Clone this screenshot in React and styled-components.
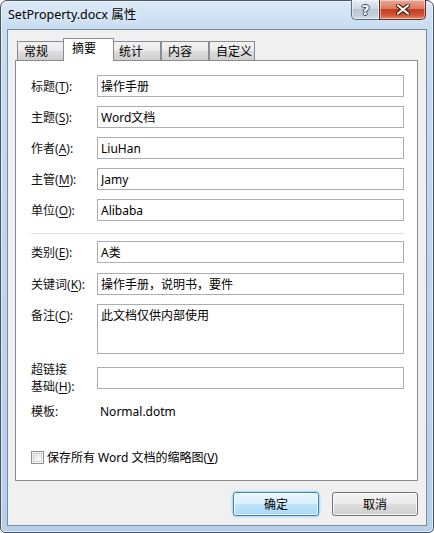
import React from 'react';
import styled, { createGlobalStyle, css } from 'styled-components';

const GlobalStyle = createGlobalStyle`
  html, body {
    margin: 0;
    padding: 0;
    background: #ffffff;
  }
  body {
    font-family: "Noto Sans", "Noto Sans CJK SC", sans-serif;
    font-size: 12px;
    color: #000;
  }
  * { box-sizing: border-box; }
`;

const Window = styled.div`
  width: 434px;
  height: 533px;
  display: flex;
  flex-direction: column;
  border: 1px solid #4a5563;
  border-radius: 7px 7px 5px 5px;
  background: linear-gradient(180deg, #dbe9f7 0%, #c8ddf2 5%, #bfd6ee 45%, #b7cfe9 100%);
  box-shadow: inset 0 0 0 1px rgba(255, 255, 255, 0.55);
  padding: 0 6px 6px 6px;
`;

const TitleBar = styled.div`
  height: 28px;
  display: flex;
  align-items: flex-start;
`;

const Title = styled.div`
  flex: 1;
  padding-left: 1px;
  line-height: 28px;
  font-size: 12.5px;
  color: #000;
  text-shadow: 0 0 8px rgba(255, 255, 255, 0.9);
`;

const CaptionGroup = styled.div`
  display: flex;
  margin-top: -1px;
  margin-right: 1px;
`;

const CaptionButton = styled.div`
  height: 20px;
  display: flex;
  align-items: center;
  justify-content: center;
  border: 1px solid #5d6d80;
  border-top: none;
  box-shadow: inset 0 0 0 1px rgba(255, 255, 255, 0.45);
  ${({ $close }) =>
    $close
      ? css`
          width: 47px;
          border-color: #6b2a1f;
          border-radius: 0 0 5px 0;
          background: linear-gradient(180deg, #eba996 0%, #dd7a62 45%, #c43d1e 50%, #cf5838 80%, #e08e6f 100%);
        `
      : css`
          width: 28px;
          border-right: none;
          border-radius: 0 0 0 5px;
          background: linear-gradient(180deg, #e7edf4 0%, #d0dae6 45%, #b7c5d5 50%, #c2cfdd 80%, #d6e0ea 100%);
        `}
`;

const HelpGlyph = styled.span`
  font-family: "DejaVu Sans", sans-serif;
  font-weight: bold;
  font-size: 14px;
  line-height: 1;
  color: #ffffff;
  text-shadow: -1px 0 #3b4a5c, 1px 0 #3b4a5c, 0 -1px #3b4a5c, 0 1px #3b4a5c;
`;

const Client = styled.div`
  flex: 1;
  display: flex;
  flex-direction: column;
  background: #f0f0f0;
  border: 1px solid #7b8a9c;
  padding: 8px 8px 9px 7px;
`;

const TabStrip = styled.div`
  height: 22px;
  display: flex;
  align-items: flex-end;
  padding-left: 2px;
  position: relative;
  z-index: 1;
`;

const Tab = styled.div`
  height: 19px;
  width: ${({ $w }) => $w}px;
  padding-left: 6px;
  line-height: 19px;
  border: 1px solid #898c95;
  border-bottom: none;
  background: linear-gradient(180deg, #f2f2f2 0%, #ebebeb 50%, #dddddd 51%, #cfcfcf 100%);
  color: #000;
  ${({ $active }) =>
    $active &&
    css`
      height: 23px;
      margin: 0 -2px -1px;
      padding-left: 8px;
      line-height: 20px;
      background: #ffffff;
      position: relative;
      z-index: 2;
    `}
`;

const Panel = styled.div`
  flex: 1;
  background: #ffffff;
  border: 1px solid #898c95;
  padding: 14px 13px 0 15px;
  display: flex;
  flex-direction: column;
`;

const Row = styled.div`
  display: flex;
  align-items: ${({ $top }) => ($top ? 'flex-start' : 'center')};
  margin-bottom: ${({ $mb }) => $mb}px;
`;

const Label = styled.div`
  width: 66px;
  flex-shrink: 0;
  line-height: ${({ $lh }) => $lh || 15}px;
  color: #111;
  white-space: pre-line;
  ${({ $top }) => $top && css`padding-top: 4px;`}
  u { text-decoration: underline; text-underline-offset: 2px; }
`;

const fieldBase = css`
  flex: 1;
  min-width: 0;
  border: 1px solid #abadb3;
  background: #ffffff;
  font-family: inherit;
  font-size: 12px;
  color: #000;
  padding: 0 3px;
  outline: none;
  margin: 0;
`;

const Field = styled.input`
  ${fieldBase}
  height: 22px;
`;

const Area = styled.textarea`
  ${fieldBase}
  height: 50px;
  padding-top: 3px;
  line-height: 15px;
  resize: none;
  overflow: hidden;
`;

const Value = styled.div`
  padding-left: 3px;
  line-height: 15px;
`;

const Separator = styled.div`
  height: 1px;
  background: #d5dfe5;
  margin-bottom: 7px;
`;

const CheckRow = styled.label`
  display: flex;
  align-items: center;
  line-height: 15px;
`;

const CheckBox = styled.span`
  width: 13px;
  height: 13px;
  margin-right: 3px;
  border: 1px solid #8f8f8f;
  background: linear-gradient(135deg, #dcdcdc 0%, #f4f4f4 60%, #ffffff 100%);
  box-shadow: inset 0 0 0 1px #f4f4f4, inset 0 0 0 2px #d0d0d0;
`;

const ButtonRow = styled.div`
  display: flex;
  justify-content: flex-end;
  gap: 13px;
  margin-top: 11px;
`;

const Button = styled.button`
  width: 86px;
  height: 24px;
  margin: 0;
  border-radius: 3px;
  font-family: inherit;
  font-size: 12px;
  color: #000;
  border: 1px solid #707070;
  box-shadow: inset 0 0 0 1px rgba(255, 255, 255, 0.8);
  background: linear-gradient(180deg, #f2f2f2 0%, #ebebeb 49%, #dddddd 50%, #cfcfcf 100%);
  ${({ $default }) =>
    $default &&
    css`
      border-color: #3c7fb1;
      box-shadow: inset 0 0 0 1px #ffffff, 0 0 2px 1px #9fd9f7;
      background: linear-gradient(180deg, #eaf6fd 0%, #d9f0fc 49%, #bee6fd 50%, #a7d9f5 100%);
    `}
`;

const CloseGlyph = () => (
  <svg width="14" height="11" viewBox="0 0 14 11">
    <path d="M2 1.5 L12 9.5 M12 1.5 L2 9.5" stroke="#4a1c14" strokeWidth="4.2" strokeLinecap="round" />
    <path d="M2 1.5 L12 9.5 M12 1.5 L2 9.5" stroke="#ffffff" strokeWidth="2.2" strokeLinecap="round" />
  </svg>
);

const tabs = [
  { name: '常规', w: 48 },
  { name: '摘要', w: 47, active: true },
  { name: '统计', w: 49 },
  { name: '内容', w: 48 },
  { name: '自定义', w: 46 },
];

const fields = [
  { label: '标题', key: 'T', value: '操作手册' },
  { label: '主题', key: 'S', value: 'Word文档' },
  { label: '作者', key: 'A', value: 'LiuHan' },
  { label: '主管', key: 'M', value: 'Jamy' },
  { label: '单位', key: 'O', value: 'Alibaba' },
];

const Keyed = ({ text, k }) => (
  <>
    {text}(<u>{k}</u>):
  </>
);

export default function App() {
  return (
    <>
      <GlobalStyle />
      <Window>
        <TitleBar>
          <Title>SetProperty.docx 属性</Title>
          <CaptionGroup>
            <CaptionButton>
              <HelpGlyph>?</HelpGlyph>
            </CaptionButton>
            <CaptionButton $close>
              <CloseGlyph />
            </CaptionButton>
          </CaptionGroup>
        </TitleBar>

        <Client>
          <TabStrip>
            {tabs.map(t => (
              <Tab key={t.name} $w={t.w + (t.active ? 4 : 0)} $active={t.active}>
                {t.name}
              </Tab>
            ))}
          </TabStrip>

          <Panel>
            {fields.map((f, i) => (
              <Row key={f.key} $mb={i === fields.length - 1 ? 12 : 9}>
                <Label><Keyed text={f.label} k={f.key} /></Label>
                <Field readOnly defaultValue={f.value} />
              </Row>
            ))}

            <Separator />

            <Row $mb={10}>
              <Label><Keyed text="类别" k="E" /></Label>
              <Field readOnly defaultValue="A类" />
            </Row>
            <Row $mb={9}>
              <Label><Keyed text="关键词" k="K" /></Label>
              <Field readOnly defaultValue="操作手册，说明书，要件" />
            </Row>
            <Row $top $mb={7}>
              <Label $top><Keyed text="备注" k="C" /></Label>
              <Area readOnly defaultValue="此文档仅供内部使用" />
            </Row>
            <Row $mb={9}>
              <Label $lh={17}>超链接{'\n'}<Keyed text="基础" k="H" /></Label>
              <Field readOnly defaultValue="" />
            </Row>
            <Row $mb={31}>
              <Label>模板:</Label>
              <Value>Normal.dotm</Value>
            </Row>

            <CheckRow>
              <CheckBox />
              <span>保存所有 Word 文档的缩略图(<u>V</u>)</span>
            </CheckRow>
          </Panel>

          <ButtonRow>
            <Button $default>确定</Button>
            <Button>取消</Button>
          </ButtonRow>
        </Client>
      </Window>
    </>
  );
}
